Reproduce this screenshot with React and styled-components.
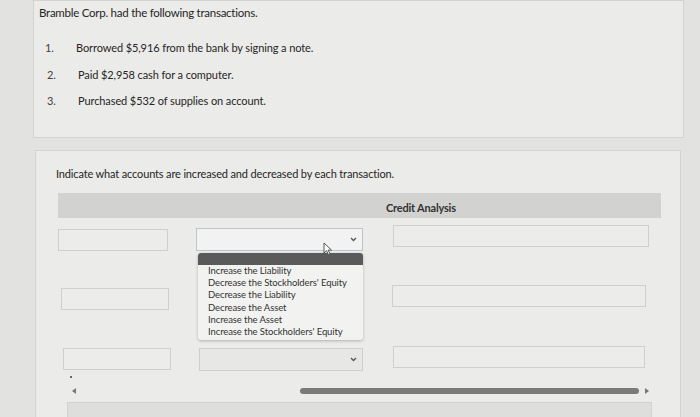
import React from 'react'
import styled, { createGlobalStyle } from 'styled-components'

const GlobalStyle = createGlobalStyle`
  body {
    margin: 0;
    background: #e2e2e0;
    font-family: Lato, "Open Sans", sans-serif;
    color: #262626;
  }
`

const Page = styled.div`
  width: 700px;
  height: 417px;
  overflow: hidden;
  padding-left: 33px;
  box-sizing: border-box;
`

const Panel = styled.section`
  width: ${(p) => p.width}px;
  margin-left: ${(p) => p.offset || 0}px;
  margin-top: ${(p) => p.top || 0}px;
  height: ${(p) => p.height}px;
  background: #ebebe9;
  border: 1px solid #d3d3d1;
  box-sizing: border-box;
  padding: ${(p) => p.pad};
  position: relative;
`

const Intro = styled.p`
  margin: 0;
  font-size: 11.5px;
  letter-spacing: -0.25px;
`

const List = styled.ol`
  list-style: none;
  margin: 22px 0 0;
  padding: 0 0 0 6px;
  display: flex;
  flex-direction: column;
  gap: 12.5px;
`

const Item = styled.li`
  display: flex;
  font-size: 11px;
  letter-spacing: -0.1px;
  line-height: 14px;
`

const Num = styled.span`
  width: ${(p) => p.w}px;
  padding-left: ${(p) => p.pl || 0}px;
  box-sizing: border-box;
  color: #444;
`

const Prompt = styled.p`
  margin: 0 0 0 -2px;
  font-size: 11px;
  letter-spacing: -0.15px;
`

const HeaderBar = styled.div`
  margin-top: 13px;
  height: 25px;
  width: 603px;
  background: #d2d2d0;
  display: grid;
  grid-template-columns: 328px 1fr;
  align-items: center;
`

const HeadCell = styled.div`
  grid-column: 2;
  font-size: 11px;
  font-weight: 700;
  letter-spacing: -0.2px;
  color: #333;
  padding-top: 3px;
`

const Rows = styled.div`
  margin-top: 10px;
  display: flex;
  flex-direction: column;
  gap: 37px;
`

const Row = styled.div`
  display: flex;
  align-items: flex-start;
  padding-left: ${(p) => p.shift}px;
  position: relative;
`

const Box = styled.div`
  width: ${(p) => p.w}px;
  height: 22px;
  margin-left: ${(p) => p.gap}px;
  margin-top: ${(p) => p.dy || 0}px;
  border: 1px solid #cfcfcd;
  background: #ececea;
  box-sizing: border-box;
`

const Select = styled.div`
  width: ${(p) => p.w}px;
  height: 23px;
  margin-left: ${(p) => p.gap}px;
  border: 1px solid ${(p) => (p.focused ? '#b9c6cf' : '#cfcfcd')};
  background: ${(p) => (p.focused ? '#f1f2f1' : '#e7e7e5')};
  box-sizing: border-box;
  display: flex;
  align-items: center;
  justify-content: flex-end;
  padding-right: 5px;
  color: #555;
`

const Menu = styled.div`
  position: absolute;
  left: 140px;
  top: 25px;
  width: 165px;
  background: #f2f2f0;
  border-radius: 3px;
  box-shadow: 0 1px 3px rgba(0, 0, 0, 0.25);
  overflow: hidden;
  z-index: 2;
`

const MenuHead = styled.div`
  height: 12px;
  background: #5a5a5a;
`

const MenuItem = styled.div`
  font-size: 9.5px;
  letter-spacing: -0.1px;
  line-height: 12.2px;
  padding-left: 10px;
  color: #333;
  &:first-of-type {
    margin-top: 6px;
  }
  &:last-child {
    margin-bottom: 2px;
  }
`

const Cursor = styled.svg`
  position: absolute;
  left: 265px;
  top: 14px;
  z-index: 3;
`

const Scroll = styled.div`
  margin-top: 17px;
  display: flex;
  align-items: center;
  padding-left: 14px;
  width: 598px;
  position: relative;
`

const Arrow = styled.span`
  width: 0;
  height: 0;
  border-top: 3px solid transparent;
  border-bottom: 3px solid transparent;
  ${(p) =>
    p.dir === 'left'
      ? 'border-right: 4px solid #777;'
      : 'border-left: 4px solid #777; margin-left: 6px;'}
`

const Thumb = styled.div`
  margin-left: 224px;
  width: 339px;
  height: 6px;
  border-radius: 3px;
  background: #7a7a7a;
`

const Dot = styled.span`
  position: absolute;
  left: 12px;
  top: -12px;
  width: 2px;
  height: 2px;
  background: #666;
`

const Footer = styled.div`
  margin-top: 8px;
  margin-left: 9px;
  width: 585px;
  height: 20px;
  background: #dededc;
  border: 1px solid #d2d2d0;
  box-sizing: border-box;
`

const Chevron = () => (
  <svg width="7" height="5" viewBox="0 0 7 5">
    <path d="M1 1l2.5 2.5L6 1" fill="none" stroke="#555" strokeWidth="1.3" />
  </svg>
)

const options = [
  'Increase the Liability',
  "Decrease the Stockholders' Equity",
  'Decrease the Liability',
  'Decrease the Asset',
  'Increase the Asset',
  "Increase the Stockholders' Equity",
]

const App = () => (
  <>
    <GlobalStyle />
    <Page>
      <Panel width={651} height={138} pad="5px 0 0 5px">
        <Intro>Bramble Corp. had the following transactions.</Intro>
        <List>
          <Item>
            <Num w={31}>1.</Num>Borrowed $5,916 from the bank by signing a note.
          </Item>
          <Item>
            <Num w={33} pl={2}>2.</Num>Paid $2,958 cash for a computer.
          </Item>
          <Item>
            <Num w={33} pl={2}>3.</Num>Purchased $532 of supplies on account.
          </Item>
        </List>
      </Panel>

      <Panel width={646} height={280} offset={2} top={12} pad="16px 0 0 22px">
        <Prompt>Indicate what accounts are increased and decreased by each transaction.</Prompt>
        <HeaderBar>
          <HeadCell>Credit Analysis</HeadCell>
        </HeaderBar>
        <Rows>
          <Row shift={0}>
            <Box w={110} gap={0} dy={1} />
            <Select w={167} gap={28} focused>
              <Chevron />
            </Select>
            <Box w={256} gap={30} dy={-3} />
            <Cursor width="10" height="14" viewBox="0 0 10 14">
              <path d="M1 1v10l2.5-2.3 2 4 1.6-.8-2-3.8H8.5z" fill="#fff" stroke="#444" strokeWidth="0.9" />
            </Cursor>
            <Menu>
              <MenuHead />
              {options.map((o) => (
                <MenuItem key={o}>{o}</MenuItem>
              ))}
            </Menu>
          </Row>
          <Row shift={3}>
            <Box w={108} gap={0} />
            <Select w={164} gap={30} />
            <Box w={254} gap={29} dy={-3} />
          </Row>
          <Row shift={5}>
            <Box w={108} gap={0} />
            <Select w={164} gap={28}>
              <Chevron />
            </Select>
            <Box w={252} gap={30} dy={-2} />
          </Row>
        </Rows>
        <Scroll>
          <Dot />
          <Arrow dir="left" />
          <Thumb />
          <Arrow dir="right" />
        </Scroll>
        <Footer />
      </Panel>
    </Page>
  </>
)

export default App
